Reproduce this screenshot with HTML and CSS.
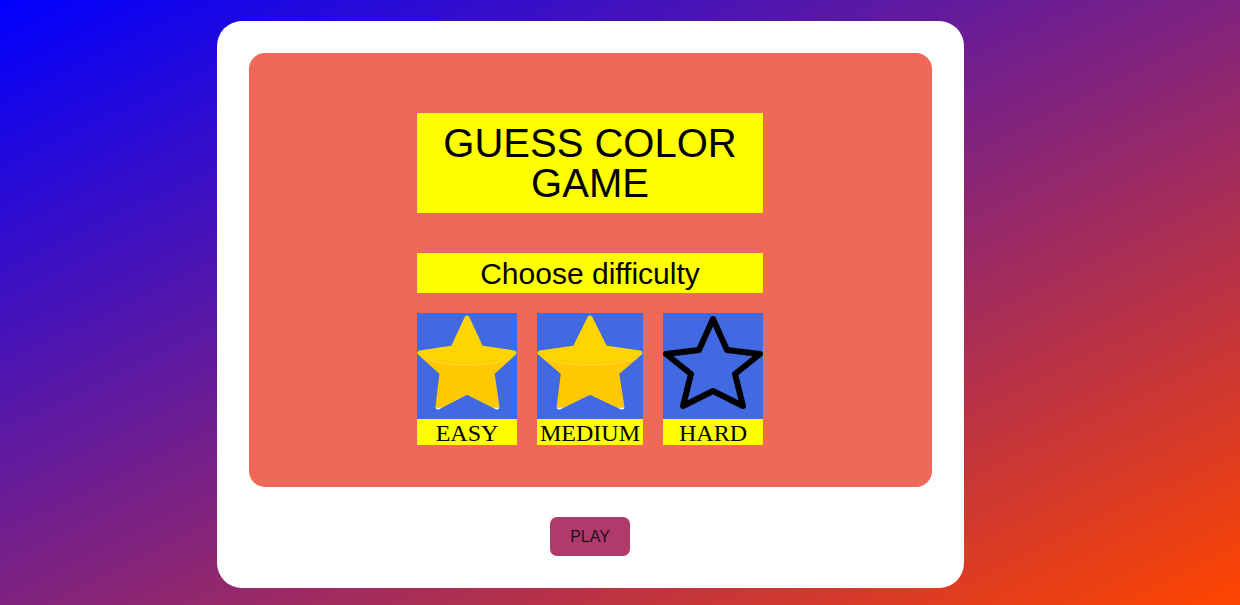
FILE: index.html
```html
<!DOCTYPE html>
<html lang="en">
<head>
    <meta charset="UTF-8">
    <meta name="viewport" content="width=device-width, initial-scale=1.0">
    <title>Guess Color Game</title>
    <link rel="stylesheet" href="styles.css">
</head>
<body>
    <div class="game-frame">
        <!-- Start screen -->
        <div class="start-panel">
            <div class="game-title">GUESS COLOR<br>GAME</div>
            <div class="difficulty-title">Choose difficulty</div>

            <div class="difficulty-list">
                <div class="difficulty-card card-easy">
                    <svg class="star" viewBox="0 0 100 106" preserveAspectRatio="none">
                        <defs>
                            <mask id="starEasy">
                                <path d="M50 5 L64 35 L97 40 L75 60 L80 94 L50 79 L21 94 L25 60 L3 40 L36 35 Z"
                                      fill="#fff" stroke="#fff" stroke-width="5" stroke-linejoin="round"/>
                            </mask>
                        </defs>
                        <g mask="url(#starEasy)">
                            <rect width="100" height="106" fill="#ffc800"/>
                            <path d="M0 0 H100 V42 Q50 58 0 42 Z" fill="#ffd500"/>
                            <path d="M0 44 Q50 60 100 44" fill="none" stroke="#ffdc3a" stroke-width="2" opacity="0.6"/>
                            <path d="M12 96 H28 M72 96 H88" stroke="#fff" stroke-width="2.5"/>
                        </g>
                    </svg>
                    <div class="difficulty-label">EASY</div>
                </div>

                <div class="difficulty-card card-medium">
                    <svg class="star" viewBox="0 0 100 106" preserveAspectRatio="none">
                        <defs>
                            <mask id="starMedium">
                                <path d="M50 5 L64 35 L97 40 L75 60 L80 94 L50 79 L21 94 L25 60 L3 40 L36 35 Z"
                                      fill="#fff" stroke="#fff" stroke-width="5" stroke-linejoin="round"/>
                            </mask>
                        </defs>
                        <g mask="url(#starMedium)">
                            <rect width="100" height="106" fill="#ffc800"/>
                            <path d="M0 0 H100 V42 Q50 58 0 42 Z" fill="#ffd500"/>
                            <path d="M0 44 Q50 60 100 44" fill="none" stroke="#ffdc3a" stroke-width="2" opacity="0.6"/>
                            <path d="M12 96 H28 M72 96 H88" stroke="#fff" stroke-width="2.5"/>
                        </g>
                    </svg>
                    <div class="difficulty-label">MEDIUM</div>
                </div>

                <div class="difficulty-card card-hard">
                    <svg class="star" viewBox="0 0 100 106">
                        <path d="M50 6 L64 37 L97 41 L72 61 L80 93 L50 78 L20 93 L28 61 L3 41 L36 37 Z"
                              fill="none" stroke="#000" stroke-width="6" stroke-linejoin="round"/>
                    </svg>
                    <div class="difficulty-label">HARD</div>
                </div>
            </div>
        </div>

        <button class="play-button">PLAY</button>
    </div>
</body>
</html>
```

FILE: styles.css
```css
* {
    margin: 0;
    padding: 0;
    box-sizing: border-box;
}

body {
    font-family: 'Liberation Sans', Arial, sans-serif;
    min-height: 100vh;
    background: linear-gradient(to bottom right, #0000ff, #ff4500);
    padding-top: 21px;
}

.game-frame {
    width: 747px;
    height: 567px;
    margin-left: 217px;
    padding: 32px;
    background: #ffffff;
    border-radius: 25px;
    display: flex;
    flex-direction: column;
}

.start-panel {
    width: 100%;
    height: 434px;
    background: #f06858;
    border-radius: 16px;
    padding: 60px 0 0 168px;
    display: flex;
    flex-direction: column;
    align-items: flex-start;
}

.game-title {
    width: 346px;
    padding: 10px 0;
    background: #ffff00;
    color: #000;
    font-size: 40px;
    line-height: 40px;
    text-align: center;
}

.difficulty-title {
    width: 346px;
    height: 40px;
    margin-top: 40px;
    background: #ffff00;
    color: #000;
    font-size: 30px;
    line-height: 42px;
    text-align: center;
}

.difficulty-list {
    display: flex;
    gap: 20px;
    margin-top: 20px;
}

.difficulty-card {
    width: 100px;
    height: 132px;
    display: flex;
    flex-direction: column;
    background: #4169e1;
    cursor: pointer;
}

.difficulty-card.card-medium {
    width: 106px;
}

.star {
    display: block;
    width: 100%;
    height: 106px;
}

.difficulty-label {
    height: 26px;
    background: #ffff00;
    color: #000;
    font-family: 'Liberation Serif', 'Times New Roman', serif;
    font-size: 24px;
    line-height: 28px;
    text-align: center;
    white-space: nowrap;
}

.play-button {
    margin: 30px 0 0 301px;
    width: 80px;
    height: 39px;
    border: none;
    border-radius: 7px;
    background: #b03a6a;
    color: #1a1020;
    font-family: 'Liberation Sans', Arial, sans-serif;
    font-size: 16px;
    cursor: pointer;
}
```
